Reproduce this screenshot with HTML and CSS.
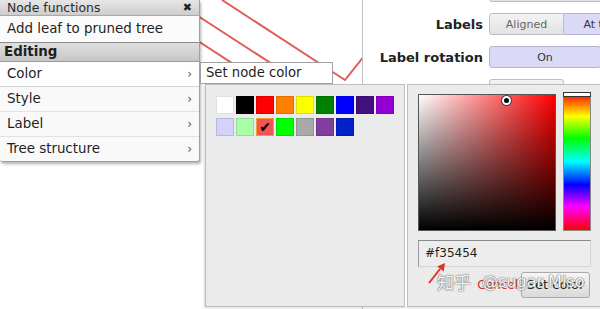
FILE: index.html
```html
<!DOCTYPE html>
<html>
<head>
<meta charset="utf-8">
<link rel="stylesheet" href="styles.css">
</head>
<body>
<div class="app">
  <div class="canvas">
    <svg class="tree" width="362" height="309" viewBox="0 0 362 309">
      <path d="M222 0 L345 80 L364 56"/>
      <path d="M198 16 L340 108"/>
      <path d="M198 41 L310 114"/>
    </svg>
  </div>
  <aside class="settings">
    <div class="settings-grid">
      <span class="lbl">Scaling</span>
      <div class="btn wide">Auto</div>
      <span class="lbl">Labels</span>
      <div class="seg"><div class="btn">Aligned</div><div class="btn on">At tips</div></div>
      <span class="lbl">Label rotation</span>
      <div class="btn on toggle">On</div>
      <span class="lbl">Branch</span>
      <div class="btn">Off</div>
    </div>
  </aside>
</div>

<div class="menu">
  <div class="menu-head"><span>Node functions</span><span class="close">✖</span></div>
  <div class="menu-item first">Add leaf to pruned tree</div>
  <div class="menu-section">Editing</div>
  <div class="menu-item active"><span>Color</span><span class="chev">›</span></div>
  <div class="menu-item"><span>Style</span><span class="chev">›</span></div>
  <div class="menu-item"><span>Label</span><span class="chev">›</span></div>
  <div class="menu-item last"><span>Tree structure</span><span class="chev">›</span></div>
</div>

<div class="submenu">Set node color</div>

<div class="picker">
  <div class="swatches">
    <div class="grid">
      <span class="sw" style="background:#ffffff"></span>
      <span class="sw" style="background:#000000"></span>
      <span class="sw" style="background:#ff0000"></span>
      <span class="sw" style="background:#ff8000"></span>
      <span class="sw" style="background:#ffff00"></span>
      <span class="sw" style="background:#008000"></span>
      <span class="sw" style="background:#0000ff"></span>
      <span class="sw" style="background:#42107f"></span>
      <span class="sw" style="background:#9400d3"></span>
      <span class="sw" style="background:#d2d2fb"></span>
      <span class="sw" style="background:#a8ffa8"></span>
      <span class="sw sel" style="background:#f35454">✔</span>
      <span class="sw" style="background:#00ff00"></span>
      <span class="sw" style="background:#a9a9a9"></span>
      <span class="sw" style="background:#7f3f9f"></span>
      <span class="sw" style="background:#0022c8"></span>
    </div>
  </div>
  <div class="pickbox">
    <div class="pick-top">
      <div class="sv"><span class="sv-mark"></span></div>
      <div class="hue"><span class="hue-mark"></span></div>
    </div>
    <div class="hex">#f35454</div>
    <div class="actions">
      <span class="cancel">Cancel</span>
      <div class="set">Set color</div>
    </div>
  </div>
</div>

<svg class="arrow" width="24" height="30" viewBox="0 0 24 30">
  <path d="M1 25 L12 11" />
  <polygon points="17,5 15.7,13.6 9.2,8.6"/>
</svg>
<div class="watermark"><span>知乎</span><span class="wm-at">@sugar Miso</span></div>
</body>
</html>
```
FILE: styles.css
```css
html, body {
  margin: 0;
  padding: 0;
}
body {
  width: 600px;
  height: 309px;
  overflow: hidden;
  position: relative;
  font-family: "DejaVu Sans", Verdana, "Noto Sans CJK SC", sans-serif;
  color: #222;
  background: #fff;
}
.app {
  display: flex;
  width: 600px;
  height: 309px;
  overflow: hidden;
}
.canvas {
  width: 362px;
  flex: none;
}
.tree {
  display: block;
}
.tree path {
  fill: none;
  stroke: #e25a5a;
  stroke-width: 2;
}
.settings {
  flex: 1;
  border-left: 1px solid #c4c4c4;
  overflow: hidden;
}
.settings-grid {
  margin-top: -20px;
  padding-left: 6px;
  display: grid;
  grid-template-columns: 114px max-content;
  grid-auto-rows: 22px;
  row-gap: 11px;
  column-gap: 6px;
}
.lbl {
  font-weight: bold;
  font-size: 13px;
  text-align: right;
  align-self: center;
  white-space: nowrap;
  color: #222;
}
.seg {
  display: flex;
}
.btn {
  width: 75px;
  height: 22px;
  box-sizing: border-box;
  border: 1px solid #bdbdbd;
  border-radius: 3px;
  font-size: 11px;
  color: #666;
  display: flex;
  align-items: center;
  justify-content: center;
  background: linear-gradient(#f3f3f3, #e2e2e2);
}
.btn.wide {
  width: 150px;
}
.seg .btn:first-child {
  border-radius: 3px 0 0 3px;
}
.seg .btn:last-child {
  border-radius: 0 3px 3px 0;
  border-left: none;
}
.btn.on {
  background: #dadaf8;
  border-color: #b3b3d3;
  color: #333;
}
.btn.toggle {
  width: 112px;
}

/* context menu */
.menu {
  position: absolute;
  left: 0;
  top: 0;
  width: 199px;
  border-right: 1px solid #a0a0a0;
  border-bottom: 1px solid #a0a0a0;
  border-radius: 0 0 3px 3px;
  box-shadow: 1px 2px 3px rgba(0, 0, 0, 0.3);
  background: #fafafa;
  font-size: 13.4px;
  color: #1e1e1e;
  z-index: 2;
}
.menu-head {
  height: 15px;
  line-height: 15px;
  font-size: 12.4px;
  padding: 0 7px;
  display: flex;
  justify-content: space-between;
  background: linear-gradient(#e6e6e6, #cdcdcd);
  border-bottom: 1px solid #a8a8a8;
  color: #2a2a2a;
}
.close {
  font-size: 11px;
  color: #222;
}
.menu-item {
  height: 24px;
  line-height: 24px;
  padding: 0 7px;
  display: flex;
  justify-content: space-between;
  border-bottom: 1px solid #e2e2e2;
  background: #f9f9f9;
}
.menu-item.first {
  height: 26px;
  line-height: 26px;
  border-bottom: 1px solid #8c8c8c;
  background: #fbfbfb;
}
.menu-item.active {
  background: #ffffff;
  border-bottom-color: #d4d4d4;
}
.menu-item.last {
  border-bottom: none;
  border-radius: 0 0 3px 3px;
}
.menu-section {
  height: 18px;
  line-height: 18px;
  padding-left: 4px;
  font-weight: bold;
  background: linear-gradient(#e0e0e0, #c6c6c6);
  border-bottom: 1px solid #9a9a9a;
}
.chev {
  font-size: 12px;
  color: #555;
}

.submenu {
  position: absolute;
  left: 200px;
  top: 62px;
  width: 133px;
  height: 22px;
  box-sizing: border-box;
  line-height: 20px;
  padding-left: 5px;
  border: 1px solid #a0a0a0;
  background: #fff;
  font-size: 13.2px;
  color: #1e1e1e;
  z-index: 4;
}

/* colour picker */
.picker {
  position: absolute;
  left: 205px;
  top: 84px;
  height: 223px;
  display: flex;
  gap: 2px;
  z-index: 3;
  box-shadow: -1px 1px 2px rgba(0, 0, 0, 0.15);
}
.swatches {
  width: 200px;
  box-sizing: border-box;
  border: 1px solid #bdbdbd;
  background: #ebebeb;
  padding: 11px 0 0 10px;
}
.grid {
  display: grid;
  grid-template-columns: repeat(9, 18px);
  grid-auto-rows: 18px;
  column-gap: 2px;
  row-gap: 4px;
}
.sw {
  box-sizing: border-box;
  border: 1px solid rgba(0, 0, 0, 0.12);
  display: flex;
  align-items: center;
  justify-content: center;
  font-size: 14px;
  line-height: 1;
  color: #000;
}
.sw.sel {
  border: 1px solid #f0a030;
}
.pickbox {
  width: 200px;
  box-sizing: border-box;
  border: 1px solid #bdbdbd;
  background: #ebebeb;
  padding: 7px 0 0 10px;
}
.pick-top {
  display: flex;
  align-items: flex-start;
}
.sv {
  position: relative;
  width: 138px;
  height: 137px;
  margin-top: 2px;
  box-sizing: border-box;
  border: 1px solid #555;
  background:
    linear-gradient(to top, #000, rgba(0, 0, 0, 0)),
    linear-gradient(to right, #fff, rgba(255, 255, 255, 0)),
    #ff0000;
}
.sv-mark {
  position: absolute;
  left: 83px;
  top: 1px;
  width: 5px;
  height: 5px;
  border-radius: 50%;
  background: #000;
  border: 2px solid #fff;
  box-shadow: 0 0 0 1px #444;
}
.hue {
  position: relative;
  width: 28px;
  height: 139px;
  margin-left: 7px;
  box-sizing: border-box;
  border: 1px solid #888;
  background: linear-gradient(#f00 0%, #ff0 17%, #0f0 33%, #0ff 50%, #00f 67%, #f0f 83%, #f00 100%);
}
.hue-mark {
  position: absolute;
  left: -1px;
  right: -1px;
  top: -1px;
  height: 5px;
  box-sizing: border-box;
  border: 1px solid #333;
  background: #fff;
}
.hex {
  margin-top: 9px;
  width: 173px;
  height: 27px;
  box-sizing: border-box;
  border: 1px solid;
  border-color: #8a8a8a #d4d4d4 #d4d4d4 #9a9a9a;
  background: #ededed;
  padding-left: 6px;
  font-size: 12px;
  line-height: 25px;
  color: #222;
}
.actions {
  margin-top: 5px;
  width: 172px;
  display: flex;
  align-items: center;
  justify-content: flex-end;
}
.cancel {
  color: #cc3333;
  font-size: 12px;
  margin-right: 3px;
}
.set {
  width: 69px;
  height: 26px;
  box-sizing: border-box;
  border: 1px solid #aaa;
  border-radius: 3px;
  background: linear-gradient(#f6f6f6, #d9d9d9);
  font-size: 13px;
  line-height: 24px;
  text-align: center;
  color: #222;
}

/* annotation overlays */
.arrow {
  position: absolute;
  left: 428px;
  top: 258px;
  z-index: 5;
}
.arrow path {
  stroke: #e3302a;
  stroke-width: 2;
  fill: none;
}
.arrow polygon {
  fill: #e3302a;
}
.watermark {
  position: absolute;
  left: 437px;
  top: 271px;
  z-index: 6;
  font-size: 17px;
  line-height: 22px;
  color: rgba(255, 255, 255, 0.95);
  text-shadow: 0 0 1px #777, 0 0 1px #777, 0 0 2px rgba(0, 0, 0, 0.4);
  white-space: nowrap;
  display: flex;
}
.watermark span:first-child {
  font-family: "Noto Sans CJK SC", sans-serif;
}
.wm-at {
  margin-left: 11px;
  font-size: 16px;
}
```
